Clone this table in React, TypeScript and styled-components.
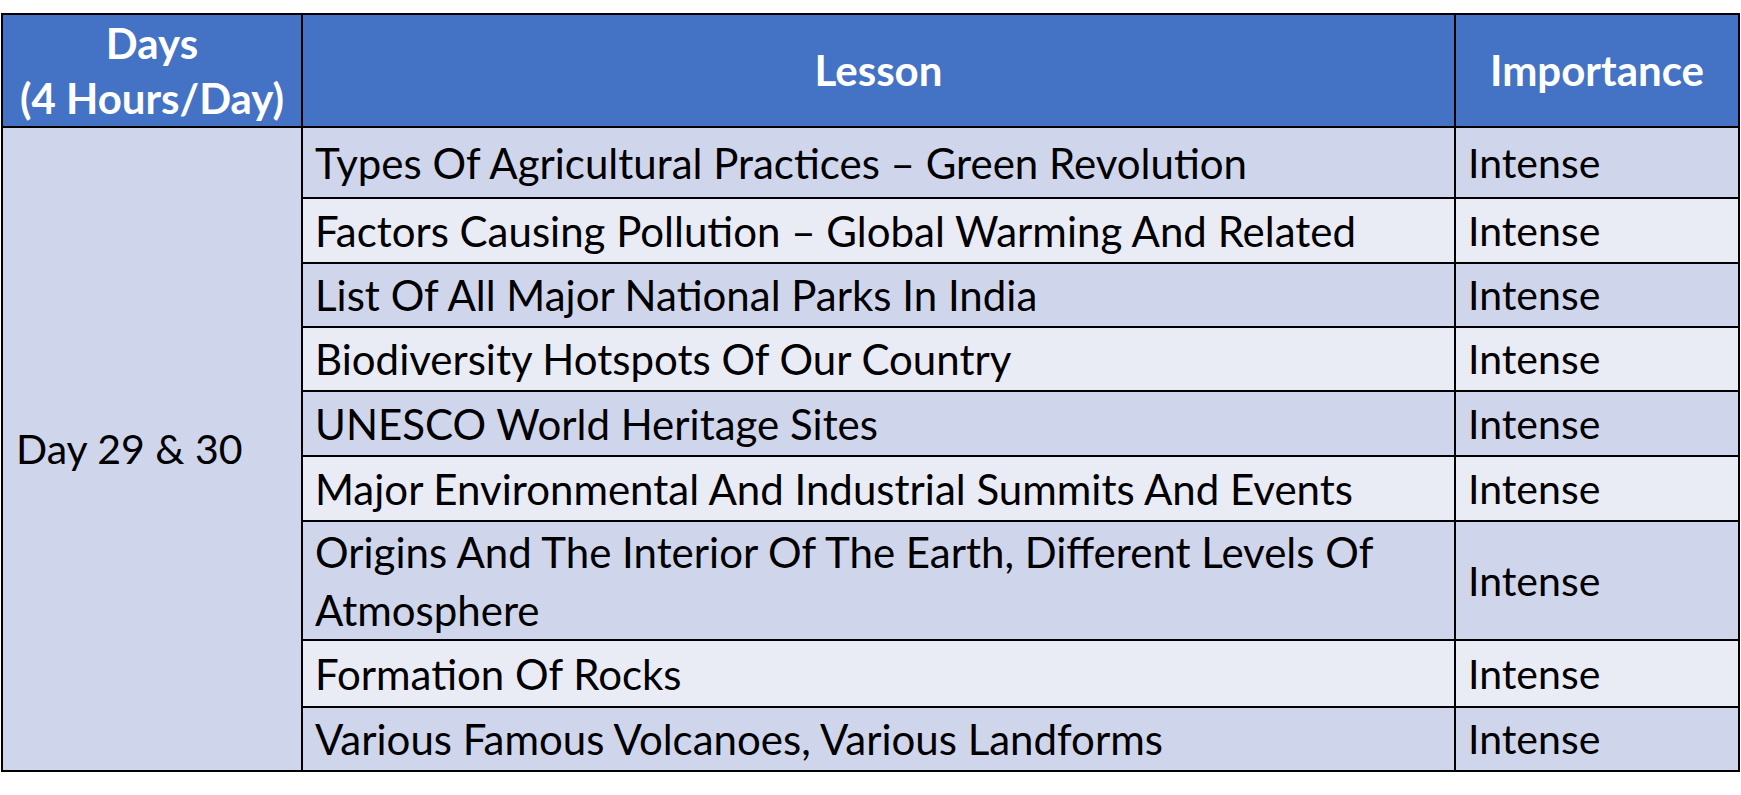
import React from "react";
import styled, { createGlobalStyle } from "styled-components";

const GlobalStyle = createGlobalStyle`
  html, body {
    margin: 0;
    padding: 0;
    background: #ffffff;
  }
  body {
    font-family: Lato, "Open Sans", "Liberation Sans", sans-serif;
  }
`;

const Page = styled.div`
  width: 1741px;
  height: 795px;
  padding: 13px 0 0 1px;
  box-sizing: border-box;
  background: #ffffff;
`;

const Table = styled.table`
  width: 1737px;
  border-collapse: collapse;
  table-layout: fixed;
  border: 2px solid #000;
  color: #000;
`;

const HeadCell = styled.th<{ $w: number }>`
  width: ${(p) => p.$w}px;
  height: 113px;
  background: #4472c4;
  color: #ffffff;
  font-weight: 700;
  font-size: 42px;
  line-height: 55px;
  text-align: center;
  vertical-align: middle;
  border: 2px solid #000;
  padding: 0 2px;
  box-sizing: border-box;
  white-space: nowrap;
`;

const Row = styled.tr<{ $h: number }>`
  height: ${(p) => p.$h}px;
`;

const Cell = styled.td<{ $alt?: boolean }>`
  background: ${(p) => (p.$alt ? "#e9ebf5" : "#cfd5ea")};
  font-size: 41px;
  line-height: 58px;
  padding: 0 10px 0 12px;
  vertical-align: middle;
  border: 2px solid #000;
  box-sizing: border-box;
`;

const LessonCell = styled(Cell)`
  font-size: 42px;
`;

const DayCell = styled(Cell)`
  background: #cfd5ea;
  padding-left: 13px;
`;

const lessons: { text: string; h: number }[] = [
  { text: "Types Of Agricultural Practices – Green Revolution", h: 71 },
  { text: "Factors Causing Pollution – Global Warming And Related", h: 65 },
  { text: "List Of All Major National Parks In India", h: 64 },
  { text: "Biodiversity Hotspots Of Our Country", h: 64 },
  { text: "UNESCO World Heritage Sites", h: 65 },
  { text: "Major Environmental And Industrial Summits And Events", h: 65 },
  {
    text: "Origins And The Interior Of The Earth, Different Levels Of Atmosphere",
    h: 119,
  },
  { text: "Formation Of Rocks", h: 67 },
  { text: "Various Famous Volcanoes, Various Landforms", h: 64 },
];

export default function App() {
  return (
    <>
      <GlobalStyle />
      <Page>
        <Table>
          <thead>
            <tr>
              <HeadCell $w={300}>
                Days
                <br />
                (4 Hours/Day)
              </HeadCell>
              <HeadCell $w={1153}>Lesson</HeadCell>
              <HeadCell $w={284}>Importance</HeadCell>
            </tr>
          </thead>
          <tbody>
            {lessons.map((l, i) => (
              <Row key={l.text} $h={l.h}>
                {i === 0 && (
                  <DayCell rowSpan={lessons.length}>Day 29 &amp; 30</DayCell>
                )}
                <LessonCell $alt={i % 2 === 1}>{l.text}</LessonCell>
                <Cell $alt={i % 2 === 1}>Intense</Cell>
              </Row>
            ))}
          </tbody>
        </Table>
      </Page>
    </>
  );
}
